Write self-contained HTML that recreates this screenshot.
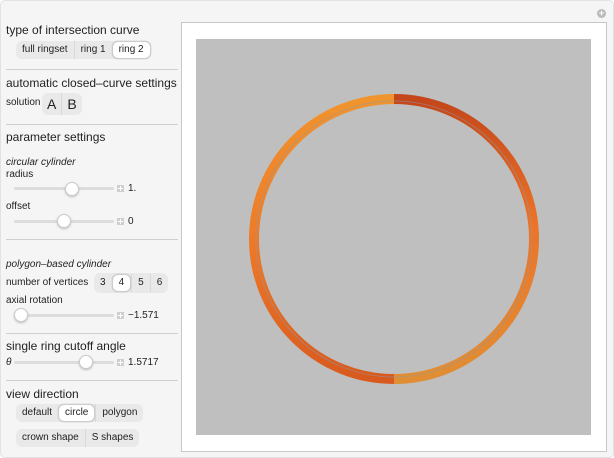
<!DOCTYPE html><html><head><style>
body{margin:0;width:614px;height:458px;background:#fff;font-family:"Liberation Sans",sans-serif;font-size:11px;color:#222;position:relative;overflow:hidden}
.outer{position:absolute;left:0;top:0;width:612px;height:456px;background:#f5f5f5;border:1px solid #e2e2e2;border-radius:5px}
.a{position:absolute;white-space:nowrap}
.h{font-size:12px}
.s{font-size:10px}
.hr{position:absolute;left:6px;width:172px;height:1px;background:#cfcfcf}
.seg{position:absolute;height:18px;background:#e9e9e9;border-radius:6px;display:flex;align-items:center;font-size:10px}
.seg span{padding:0 6px;border-left:1px solid #d8d8d8;line-height:18px}
.seg span:first-child{border-left:none}
.seg .on{background:#fff;border-radius:6px;border:1px solid #ccc;line-height:16px;box-shadow:0 0 1px #aaa}
.track{position:absolute;height:3px;background:#dcdcdc;border-radius:2px;width:100px;left:14px}
.knob{position:absolute;width:12px;height:12px;border-radius:50%;background:#fff;border:1px solid #ccc;box-shadow:0 1px 2px #bbb}
.pl{position:absolute;width:7px;height:7px;background:#cfcfcf;left:117px}
.pl:before{content:"";position:absolute;left:1px;top:3px;width:5px;height:1px;background:#fff}
.pl:after{content:"";position:absolute;left:3px;top:1px;width:1px;height:5px;background:#fff}
</style></head><body><div class="outer"></div>
<div class="a h" style="left:6px;top:23px">type of intersection curve</div>
<div class="seg" style="left:16px;top:41px"><span>full ringset</span><span>ring 1</span><span class="on">ring 2</span></div>
<div class="hr" style="top:69px"></div>
<div class="a h" style="left:6px;top:76px">automatic closed–curve settings</div>
<div class="a s" style="left:6px;top:97px">solution</div>
<div class="seg" style="left:42px;top:93px;height:22px;font-size:14px"><span style="line-height:22px;padding:0 5px">A</span><span style="line-height:22px;padding:0 5px">B</span></div>
<div class="hr" style="top:124px"></div>
<div class="a h" style="left:6px;top:130px">parameter settings</div>
<div class="a s" style="left:6px;top:157px;font-style:italic">circular cylinder</div>
<div class="a s" style="left:6px;top:169px">radius</div>
<div class="track" style="top:187px"></div><div class="knob" style="left:65px;top:182px"></div><div class="pl" style="top:185px"></div><div class="a s" style="left:128px;top:183px">1.</div>
<div class="a s" style="left:6px;top:201px">offset</div>
<div class="track" style="top:220px"></div><div class="knob" style="left:57px;top:214px"></div><div class="pl" style="top:218px"></div><div class="a s" style="left:128px;top:216px">0</div>
<div class="hr" style="top:239px"></div>
<div class="a s" style="left:6px;top:259px;font-style:italic">polygon–based cylinder</div>
<div class="a s" style="left:6px;top:277px">number of vertices</div>
<div class="seg" style="left:94px;top:273px;height:20px"><span>3</span><span class="on">4</span><span>5</span><span>6</span></div>
<div class="a s" style="left:6px;top:295px">axial rotation</div>
<div class="track" style="top:314px"></div><div class="knob" style="left:14px;top:308px"></div><div class="pl" style="top:312px"></div><div class="a s" style="left:128px;top:310px">−1.571</div>
<div class="hr" style="top:333px"></div>
<div class="a h" style="left:6px;top:339px">single ring cutoff angle</div>
<div class="a s" style="left:6px;top:357px;font-style:italic">θ</div>
<div class="track" style="top:361px"></div><div class="knob" style="left:79px;top:355px"></div><div class="pl" style="top:359px"></div><div class="a s" style="left:128px;top:357px">1.5717</div>
<div class="hr" style="top:380px"></div>
<div class="a h" style="left:6px;top:387px">view direction</div>
<div class="seg" style="left:16px;top:404px"><span>default</span><span class="on">circle</span><span>polygon</span></div>
<div class="seg" style="left:16px;top:429px"><span>crown shape</span><span>S shapes</span></div>
<div class="a" style="left:597px;top:9px;width:9px;height:9px;border-radius:50%;background:#bbb;color:#fff;font-size:9px;line-height:9px;text-align:center;font-weight:bold">+</div>
<div class="a" style="left:181px;top:22px;width:424px;height:428px;background:#fff;border:1px solid #c8c8c8"></div>
<div class="a" style="left:196px;top:39px;width:395px;height:396px;background:#bfbfbf"></div>
<svg class="a" style="left:0;top:0" width="614" height="458">
<defs>
<linearGradient id="r" x1="0" y1="0" x2="0" y2="1"><stop offset="0" stop-color="#c4461a"/><stop offset="0.45" stop-color="#ec7428"/><stop offset="1" stop-color="#e08e34"/></linearGradient>
<linearGradient id="l" x1="0" y1="0" x2="0" y2="1"><stop offset="0" stop-color="#f0942e"/><stop offset="0.5" stop-color="#ee7a28"/><stop offset="1" stop-color="#d85a1e"/></linearGradient>
</defs>
<path d="M394 99 A140 140 0 0 1 394 379" fill="none" stroke="url(#r)" stroke-width="10"/>
<path d="M394 99 A140 140 0 0 0 394 379" fill="none" stroke="url(#l)" stroke-width="10"/>
<circle cx="394" cy="239" r="138" fill="none" stroke="#8a9bb0" stroke-width="0.8" opacity="0.6"/>
</svg>
</body></html>
